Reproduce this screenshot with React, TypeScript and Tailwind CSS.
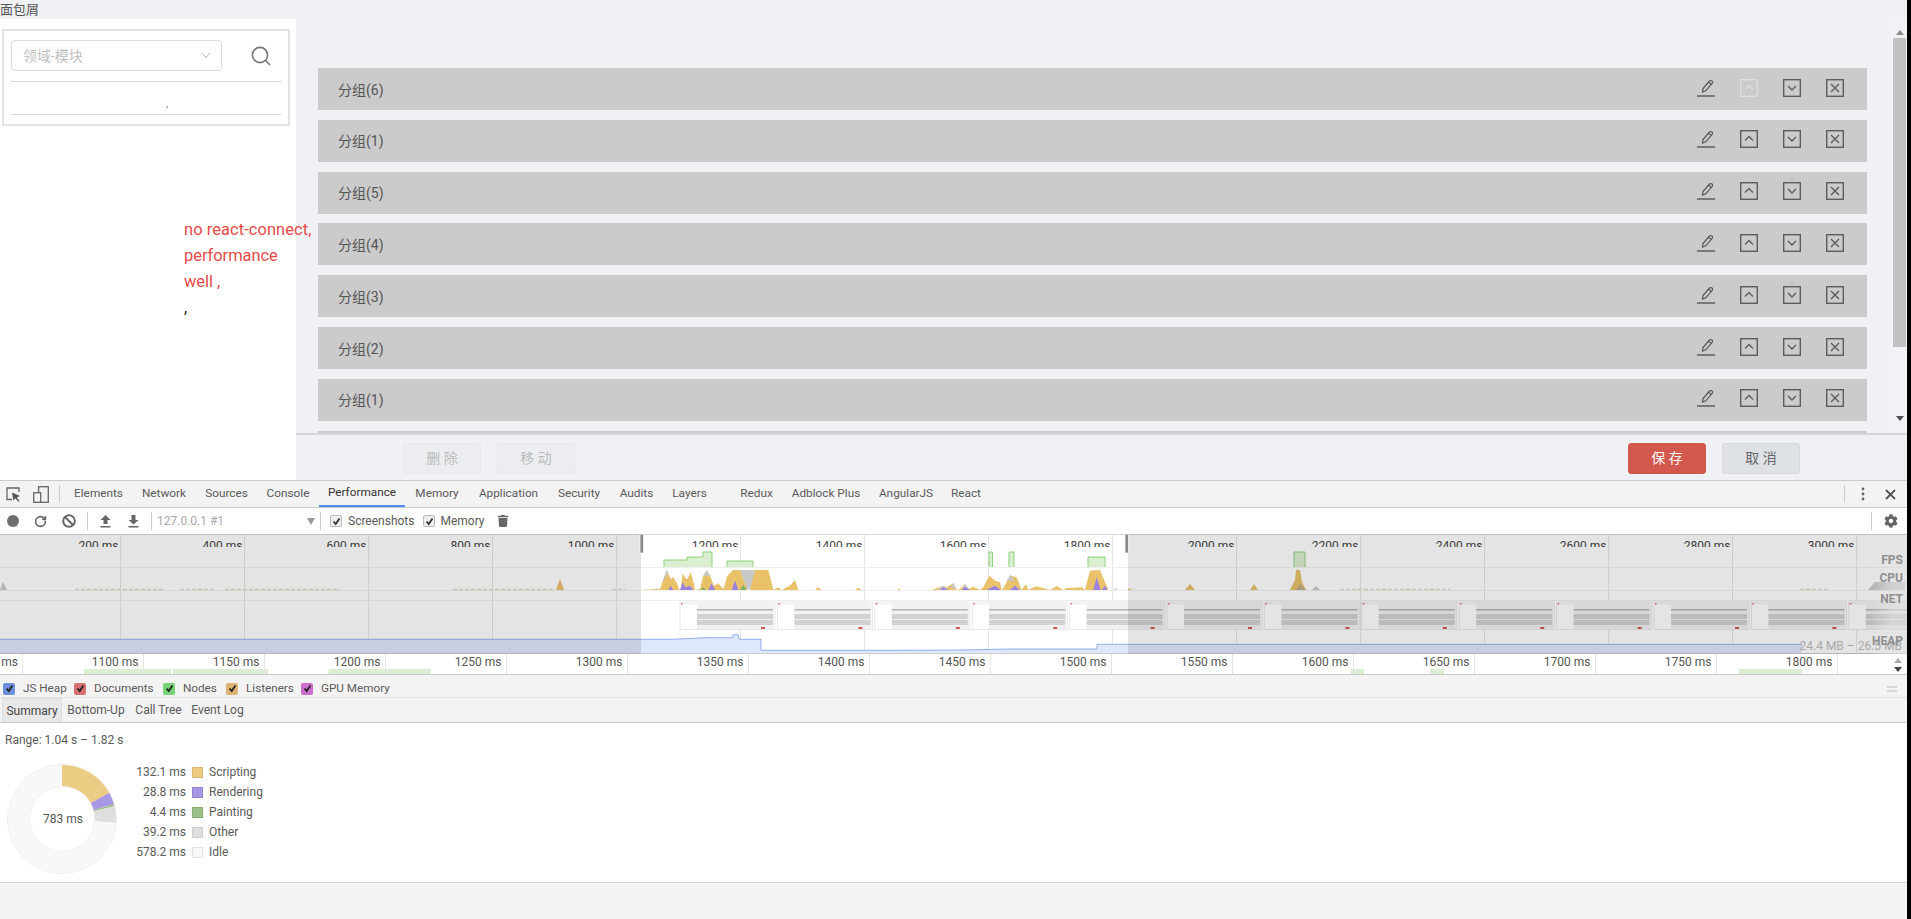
import React from 'react';
import { RotateCw } from 'lucide-react';
import { FaCog, FaTrash } from 'react-icons/fa';

const groups = ['分组(6)', '分组(1)', '分组(5)', '分组(4)', '分组(3)', '分组(2)', '分组(1)', '分组(0)'];

const tabs = [
  { name: 'Elements', cls: 'w-[67px]' },
  { name: 'Network', cls: 'w-[64px]' },
  { name: 'Sources', cls: 'w-[61px]' },
  { name: 'Console', cls: 'w-[62px]' },
  { name: 'Performance', cls: 'w-[86px]' },
  { name: 'Memory', cls: 'w-[64px]' },
  { name: 'Application', cls: 'w-[79px]' },
  { name: 'Security', cls: 'w-[62px]' },
  { name: 'Audits', cls: 'w-[53px]' },
  { name: 'Layers', cls: 'w-[53px] mr-[15px]' },
  { name: 'Redux', cls: 'w-[51px]' },
  { name: 'Adblock Plus', cls: 'w-[88px]' },
  { name: 'AngularJS', cls: 'w-[72px]' },
  { name: 'React', cls: 'w-[48px]' },
];

const counters = [
  { name: 'JS Heap', swatch: 'bg-[#6c8fdb]', width: 'w-[71px]' },
  { name: 'Documents', swatch: 'bg-[#d66f6f]', width: 'w-[89px]' },
  { name: 'Nodes', swatch: 'bg-[#78d278]', width: 'w-[63px]' },
  { name: 'Listeners', swatch: 'bg-[#dfb373]', width: 'w-[75px]' },
  { name: 'GPU Memory', swatch: 'bg-[#cc6ccc]', width: 'w-[100px]' },
];

const summary = [
  { value: 132.1, label: 'Scripting', color: '#eccb83', cls: 'bg-[#eccb83] border-[#d9b76c]' },
  { value: 28.8, label: 'Rendering', color: '#a897e3', cls: 'bg-[#a897e3] border-[#9583d3]' },
  { value: 4.4, label: 'Painting', color: '#9bc089', cls: 'bg-[#9bc089] border-[#86ad73]' },
  { value: 39.2, label: 'Other', color: '#dedede', cls: 'bg-[#dedede] border-[#cfcfcf]' },
  { value: 578.2, label: 'Idle', color: '#f8f8f8', cls: 'bg-[#f8f8f8] border-[#e2e2e2]' },
];

const gridX = Array.from({ length: 15 }, (_, i) => 120.5 + i * 124);
const rulerX = Array.from({ length: 15 }, (_, i) => 143.5 + i * 121);

const PencilIcon = () => (
  <svg width="18" height="18" viewBox="0 0 18 18" fill="none" stroke="#555" strokeWidth="1.2">
    <path d="M5.5 13 L6 9.5 L12.5 2 Q13.5 1 15 2 Q16.2 3.2 15.2 4.4 L8.7 11.8 Z" />
    <path d="M11.6 3.2 L14.2 5.4" />
    <path d="M0 17 H18" strokeWidth="1.4" />
  </svg>
);

const BoxIcon = ({ d, faded }: { d: string; faded?: boolean }) => (
  <svg width="18" height="18" viewBox="0 0 18 18" fill="none" stroke={faded ? '#dedede' : '#5c5c5c'} strokeWidth="1.4">
    <rect x="0.7" y="0.7" width="16.6" height="16.6" />
    <path d={d} />
  </svg>
);

const GroupRow = ({ name, first }: { name: string; first: boolean }) => (
  <div className="flex h-[42px] shrink-0 items-center justify-between bg-[#cbcbcb] pl-[20px] pr-[23px] text-[14px] text-[#555]">
    <span className="pt-[2px]">{name}</span>
    <div className="mb-[3px] flex items-center gap-[25px]">
      <PencilIcon />
      <BoxIcon d="M5 10.5 L9 6.5 L13 10.5" faded={first} />
      <BoxIcon d="M5 7 L9 11 L13 7" />
      <BoxIcon d="M5 5 L13 13 M13 5 L5 13" />
    </div>
  </div>
);

const LeftPanel = () => (
  <div className="relative z-10 w-[296px] shrink-0 bg-white pl-[2px] pt-[10px]">
    <div className="h-[97px] w-[288px] border-2 border-[#e2e2e2] px-[7px] pt-[9px]">
      <div className="flex items-center">
        <div className="flex h-[31px] w-[211px] items-center justify-between rounded-[4px] border border-[#dcdcdc] pl-[11px] pr-[10px] text-[14px] text-[#c0c0c0]">
          <span className="pt-[1px]">领域-模块</span>
          <svg width="10" height="7" viewBox="0 0 10 7" fill="none" stroke="#c4c4c4" strokeWidth="1.1">
            <path d="M1 1 L5 5.5 L9 1" />
          </svg>
        </div>
        <svg className="ml-[29px]" width="20" height="20" viewBox="0 0 20 20" fill="none" stroke="#777" strokeWidth="1.6">
          <circle cx="9" cy="9" r="7.6" />
          <path d="M14.5 14.5 L19 19" />
        </svg>
      </div>
      <div className="mt-[10px] flex h-[34px] w-[270px] items-center justify-center border-y border-[#d5d5d5] pl-[42px] pt-[10px] text-[11px] leading-none text-[#888]">
        ,
      </div>
    </div>
    <div className="ml-[182px] mt-[91px] whitespace-nowrap text-[16.4px] leading-[26px] text-[#e64a4a]">
      <div className="tracking-[0.1px]">no react-connect,</div>
      <div>performance</div>
      <div>well ,</div>
      <div className="text-[#222]">,</div>
    </div>
  </div>
);

const FormButton = ({ text, cls }: { text: string; cls: string }) => (
  <button className={`h-[31px] w-[78px] rounded-[3px] border text-[14px] ${cls}`}>{text}</button>
);

const Scrollbar = () => (
  <div className="flex w-[17px] shrink-0 flex-col items-center bg-[#f1f2f6] pl-[2px]">
    <div className="mt-[11px] h-0 w-0 border-x-[4px] border-b-[5px] border-x-transparent border-b-[#8b8b8b]" />
    <div className="mt-[3px] h-[309px] w-[13px] bg-[#c1c1c1]" />
    <div className="mt-[69px] h-0 w-0 border-x-[4px] border-t-[5px] border-x-transparent border-t-[#505050]" />
  </div>
);

const Page = () => (
  <div className="flex h-[480px] shrink-0 flex-col bg-[#f0f1f5]">
    <div className="h-[19px] shrink-0 text-[13px] leading-[19px] text-[#555]">面包屑</div>
    <div className="flex min-h-0 flex-1">
      <LeftPanel />
      <div className="flex min-w-0 flex-1 flex-col">
        <div className="flex h-[414px] shrink-0 overflow-hidden">
          <div className="flex min-w-0 flex-1 flex-col gap-[9.83px] pl-[22px] pr-[23px] pt-[49px]">
            {groups.map((g, i) => (
              <GroupRow key={i} name={g} first={i === 0} />
            ))}
          </div>
          <Scrollbar />
        </div>
        <div className="flex flex-1 items-start justify-between border-t-2 border-[#d5d6d9] pl-[107px] pr-[107px] pt-[8px]">
          <div className="flex gap-[16px]">
            <FormButton text="删 除" cls="border-[#e6e8eb] bg-[#ebedf0] text-[#bcbcbc]" />
            <FormButton text="移 动" cls="border-[#e6e8eb] bg-[#ebedf0] text-[#bcbcbc]" />
          </div>
          <div className="flex gap-[16px]">
            <FormButton text="保 存" cls="border-[#d2574c] bg-[#d2574c] text-white" />
            <FormButton text="取 消" cls="border-[#d5d8dd] bg-[#dee1e6] text-[#666]" />
          </div>
        </div>
      </div>
    </div>
  </div>
);

const TabBar = () => (
  <div className="flex h-[28px] shrink-0 items-center border-y border-[#cbcbcb] bg-[#f3f3f3] text-[11.8px] text-[#5a5a5a]">
    <svg className="ml-[6px]" width="15" height="15" viewBox="0 0 15 15" fill="none" stroke="#666" strokeWidth="1.3">
      <path d="M6 12.5 H1 V1 H13 V5" />
      <path d="M6 5.5 L14 9 L10.8 10.4 L13.6 14 L12.2 14.8 L9.6 11.2 L7.4 13.5 Z" fill="#555" stroke="none" />
    </svg>
    <svg className="ml-[12px]" width="16" height="17" viewBox="0 0 16 17" fill="none" stroke="#666" strokeWidth="1.3">
      <rect x="5.6" y="0.7" width="9.7" height="15.6" />
      <rect x="0.7" y="6.7" width="7" height="9.6" fill="#f3f3f3" />
    </svg>
    <div className="ml-[10px] mr-[5px] h-[18px] w-px bg-[#ccc]" />
    <div className="flex h-full items-stretch">
      {tabs.map((t) => (
        <div
          key={t.name}
          className={`flex items-center justify-center ${t.cls} ${t.name === 'Performance' ? 'border-b-2 border-[#4d8ef0] text-[#333]' : ''}`}
        >
          {t.name}
        </div>
      ))}
    </div>
    <div className="ml-auto h-[18px] w-px bg-[#ccc]" />
    <svg className="ml-[16px]" width="4" height="14" viewBox="0 0 4 14" fill="#666">
      <circle cx="2" cy="2" r="1.4" />
      <circle cx="2" cy="7" r="1.4" />
      <circle cx="2" cy="12" r="1.4" />
    </svg>
    <svg className="ml-[20px] mr-[11px]" width="11" height="11" viewBox="0 0 11 11" stroke="#555" strokeWidth="1.8">
      <path d="M1 1 L10 10 M10 1 L1 10" />
    </svg>
  </div>
);

const CheckBox = () => (
  <span className="flex h-[12px] w-[12px] items-center justify-center rounded-[2px] border border-[#bbb] bg-[#eee]">
    <svg width="9" height="9" viewBox="0 0 9 9" fill="none" stroke="#333" strokeWidth="1.8">
      <path d="M1.5 4.5 L3.7 7 L7.5 1.5" />
    </svg>
  </span>
);

const ToolBar = () => (
  <div className="flex h-[26px] shrink-0 items-center bg-white text-[12px] text-[#5a5a5a]">
    <div className="ml-[7px] h-[12px] w-[12px] rounded-full bg-[#6e6e6e]" />
    <RotateCw className="ml-[15px] text-[#666]" size={13} strokeWidth={3} />
    <svg className="ml-[15px]" width="14" height="14" viewBox="0 0 14 14" fill="none" stroke="#666" strokeWidth="2">
      <circle cx="7" cy="7" r="5.8" />
      <path d="M3 3 L11 11" />
    </svg>
    <div className="ml-[11px] h-[18px] w-px bg-[#ccc]" />
    <svg className="ml-[12px]" width="11" height="13" viewBox="0 0 11 13" fill="#666">
      <path d="M5.5 0 L10.5 5 H7.5 V9 H3.5 V5 H0.5 Z M0.5 11 H10.5 V12.6 H0.5 Z" />
    </svg>
    <svg className="ml-[17px]" width="11" height="13" viewBox="0 0 11 13" fill="#666">
      <path d="M3.5 0 H7.5 V5 H10.5 L5.5 9.6 L0.5 5 H3.5 Z M0.5 11 H10.5 V12.6 H0.5 Z" />
    </svg>
    <div className="ml-[12px] h-[18px] w-px bg-[#ccc]" />
    <div className="ml-[5px] flex w-[160px] items-center justify-between text-[#aaa]">
      <span>127.0.0.1 #1</span>
      <span className="mr-[2px] h-0 w-0 border-x-[4px] border-t-[7px] border-x-transparent border-t-[#999]" />
    </div>
    <div className="ml-[3px] h-[18px] w-px bg-[#ccc]" />
    <div className="ml-[9px]"><CheckBox /></div>
    <span className="ml-[6px]">Screenshots</span>
    <div className="ml-[9px]"><CheckBox /></div>
    <span className="ml-[5px]">Memory</span>
    <FaTrash className="ml-[12px] text-[#666]" size={12} />
    <div className="ml-auto h-[18px] w-px bg-[#ccc]" />
    <FaCog className="ml-[12px] mr-[9px] text-[#666]" size={14} />
  </div>
);

const thumbX = Array.from({ length: 13 }, (_, i) => 680 + i * 97.4);

const Thumb = ({ x }: { x: number }) => (
  <g transform={`translate(${x} 602)`}>
    <rect x="0" y="0" width="95" height="27.5" fill="#fff" stroke="#e8e8e8" />
    <rect x="17" y="1" width="77" height="26" fill="#f1f1f3" />
    <rect x="1" y="0.5" width="93" height="2" fill="#f2f2f2" />
    <rect x="1" y="1" width="1.5" height="1.5" fill="#d66" />
    <rect x="17" y="7" width="76" height="1.5" fill="#b4b4b4" />
    <rect x="17" y="12" width="76" height="5" fill="#d2d2d2" />
    <rect x="17" y="18" width="76" height="5" fill="#d2d2d2" />
    <rect x="81" y="25" width="4" height="2" fill="#d2574c" />
  </g>
);

const Overview = () => (
  <svg className="block shrink-0" width="1907" height="120" viewBox="0 534 1907 120">
    <defs>
      <clipPath id="rulerClip">
        <rect x="0" y="534" width="1907" height="13" />
      </clipPath>
      <linearGradient id="fadeRight" x1="0" x2="1" y1="0" y2="0">
        <stop offset="0" stopColor="#e5e5e5" stopOpacity="0" />
        <stop offset="0.6" stopColor="#e5e5e5" stopOpacity="1" />
      </linearGradient>
    </defs>
    <rect x="0" y="534" width="1907" height="120" fill="#fff" />

    {gridX.map((x) => (
      <path key={x} d={`M${x} 534 V653`} stroke="#e6e6e6" />
    ))}
    {[567.5, 590.5, 600.5].map((y) => (
      <path key={y} d={`M0 ${y} H1907`} stroke="#efefef" />
    ))}

    <g clipPath="url(#rulerClip)" fontSize="12" fill="#444" textAnchor="end" fontFamily="Roboto, sans-serif">
      {gridX.map((x, i) => (
        <text key={x} x={x - 2} y="550">{`${(i + 1) * 200} ms`}</text>
      ))}
    </g>
    <path d="M0 534.5 H1907" stroke="#d8d8d8" />

    {/* FPS */}
    <g fill="#d9efd0" stroke="#8fd07c" strokeWidth="1">
      <path d="M664 567 V560 H687 V557 H703 V552 H712 V567" />
      <path d="M727 567 V561 H753 V567" />
      <path d="M989 567 V552 H992.5 V567" />
      <path d="M1009 567 V552 H1014 V567" />
      <path d="M1088 567 V557 H1105 V567" />
      <path d="M1294 567 V552 H1305 V567" />
    </g>

    {/* CPU, selection start */}
    <g transform="translate(640 534) scale(0.3333)">
      <path d="M300 108 L345 108 L335 166 L320 166 Z" fill="#c8c8c8" />
      <path
        fill="#e8c168"
        d="M0 168 L40 166 L60 165 L65 150 L80 108 L92 135 L100 130 L112 150 L118 168 L122 165 L128 118 L138 135 L142 135 L152 115 L162 150 L165 168 L180 165 L190 125 L200 110 L212 130 L222 155 L235 148 L245 160 L250 165 L262 125 L280 108 L300 108 L322 168 L330 168 L345 108 L385 108 L400 168 L415 160 L425 168 L440 160 L450 155 L465 138 L475 168 L525 168 L535 160 L545 168 L645 168 L655 162 L665 168 L770 168 L780 163 L780 168 Z"
      />
      <path d="M65 150 L80 108 L92 125 L85 115 Z M190 125 L200 108 L212 125 Z M45 166 L50 162 L55 166 Z" fill="#c8c8c8" />
      <path fill="#9b82e0" d="M85 168 L92 155 L100 168 Z M120 168 L128 145 L136 160 L142 158 L150 155 L160 168 Z M205 168 L215 148 L225 168 Z M275 168 L285 140 L295 168 Z" />
      <path fill="#7fb069" d="M182 168 L190 160 L198 168 Z M300 168 L310 152 L320 168 Z" />
    </g>
    {/* CPU, selection end */}
    <g transform="translate(900 534) scale(0.3333)">
      <path
        fill="#e8c168"
        d="M0 168 L95 168 L130 155 L140 160 L160 148 L170 168 L180 165 L195 150 L205 165 L220 158 L240 168 L250 160 L268 125 L285 140 L300 145 L305 168 L312 160 L330 124 L350 130 L365 168 L378 150 L385 168 L395 162 L410 157 L450 168 L470 156 L490 168 L500 162 L545 160 L555 168 L570 110 L600 108 L625 168 L680 168 L690 163 L695 168 Z"
      />
      <path fill="#c8c8c8" d="M110 166 L130 155 L145 166 Z M150 160 L160 148 L170 166 Z M188 160 L195 150 L205 165 Z M320 140 L330 124 L345 140 Z M640 168 L647 163 L654 168 Z" />
      <path fill="#9b82e0" d="M120 168 L130 160 L145 168 Z M185 168 L195 158 L210 168 Z M260 168 L285 155 L302 168 Z M330 168 L345 155 L360 168 Z M580 168 L590 130 L602 168 Z M605 168 L615 155 L622 168 Z" />
    </g>
    {/* CPU, outside the selection */}
    <path d="M0 590 L3 582 L7 590 Z" fill="#c8c8c8" />
    <path d="M75 589.5 H165 M180 589.5 H215 M225 589.5 H340 M453 589.5 H555 M612 589.5 H625" stroke="#e5dcc6" strokeWidth="1.5" strokeDasharray="4 2" />
    <path d="M556 590 L560 579 L564 590 Z" fill="#e8c168" />
    <path d="M1185 590 L1190 584 L1195 590 Z M1250 590 L1254 584 L1258 590 Z" fill="#e8c168" />
    <path d="M1290 590 L1295 580 L1296 570 L1300 570 L1302 582 L1306 590 Z" fill="#e8c168" />
    <path d="M1296 590 L1300 584 L1306 590 Z M1312 590 L1316 586 L1320 590 Z M1868 590 L1875 582 L1905 582 V590 Z" fill="#9b9b9b" opacity="0.55" />
    <path d="M1340 589.5 H1450 M1800 589.5 H1830" stroke="#e5dcc6" strokeWidth="1.5" strokeDasharray="4 2" />

    {thumbX.map((x) => (
      <Thumb key={x} x={x} />
    ))}

    {/* Heap */}
    <path
      d="M0 639.3 H672 L707 637.7 H733 V634.7 H738 L739 639.3 H761 V650.3 H900 L963 650 L1010 649 H1097 V644.3 H1802 V653 H0 Z"
      fill="#dfe7fa"
    />
    <path
      d="M0 639.3 H672 L707 637.7 H733 V634.7 H738 L739 639.3 H761 V650.3 H900 L963 650 L1010 649 H1097 V644.3 H1802"
      fill="none"
      stroke="#8fb0ec"
    />
    <path d="M0 653.5 H1907" stroke="#ccc" />

    {/* Dim everything outside the selected range */}
    <rect x="0" y="534" width="641" height="120" fill="#000" opacity="0.105" />
    <rect x="1128" y="534" width="779" height="120" fill="#000" opacity="0.105" />
    <rect x="640" y="534" width="3.5" height="19" fill="#8a8a8a" stroke="#fff" strokeWidth="0.7" />
    <rect x="1125" y="534" width="3.5" height="19" fill="#8a8a8a" stroke="#fff" strokeWidth="0.7" />

    <rect x="1870" y="567" width="37" height="87" fill="url(#fadeRight)" opacity="0.6" />
    <g fontSize="12" fontFamily="Roboto, sans-serif" textAnchor="end">
      <text x="1902" y="650" fill="#a8a8a8">24.4 MB – 26.5 MB</text>
      <g fill="#8f8f8f" fontWeight="700">
        <text x="1903" y="563.5">FPS</text>
        <text x="1903" y="581.5">CPU</text>
        <text x="1903" y="602.5">NET</text>
        <text x="1903" y="644.5">HEAP</text>
      </g>
    </g>
  </svg>
);

const TimeRuler = () => (
  <svg className="block shrink-0" width="1907" height="21" viewBox="0 654 1907 21">
    <rect x="0" y="654" width="1907" height="21" fill="#fff" />
    <g fill="#dcefd4">
      <rect x="84" y="669" width="87" height="5" />
      <rect x="173" y="669" width="95" height="5" />
      <rect x="328.5" y="669" width="102.5" height="5" />
      <rect x="1351" y="669" width="13" height="5" />
      <rect x="1430" y="669" width="14" height="5" />
      <rect x="1739" y="669" width="63" height="5" />
    </g>
    <path d="M22.5 654 V674" stroke="#e6e6e6" />
    {rulerX.map((x) => (
      <path key={x} d={`M${x} 654 V674`} stroke="#e6e6e6" />
    ))}
    <g fontSize="12" fill="#555" textAnchor="end" fontFamily="Roboto, sans-serif">
      <text x="18" y="666">0 ms</text>
      {rulerX.map((x, i) => (
        <text key={x} x={x - 5} y="666">{`${1100 + i * 50} ms`}</text>
      ))}
    </g>
    <path d="M1898 658 L1902 663 H1894 Z" fill="#aaa" />
    <path d="M1894 667 H1902 L1898 672 Z" fill="#444" />
    <path d="M0 674.5 H1907" stroke="#c8c8c8" />
  </svg>
);

const CounterRow = () => (
  <div className="flex h-[23px] shrink-0 items-center border-b border-[#e2e2e2] bg-[#f3f3f3] pl-[3px] pt-[5px] text-[11.7px] text-[#5a5a5a]">
    {counters.map((c) => (
      <div key={c.name} className={`flex items-center gap-[8px] ${c.width}`}>
        <span className={`flex h-[12px] w-[12px] items-center justify-center rounded-[2px] ${c.swatch}`}>
          <svg width="9" height="9" viewBox="0 0 9 9" fill="none" stroke="#222" strokeWidth="1.8">
            <path d="M1.5 4.5 L3.7 7 L7.5 1.5" />
          </svg>
        </span>
        <span>{c.name}</span>
      </div>
    ))}
    <svg className="ml-auto mr-[10px]" width="10" height="6" viewBox="0 0 10 6" stroke="#bbb">
      <path d="M0 1 H10 M0 5 H10" />
    </svg>
  </div>
);

const SubTabs = () => (
  <div className="flex h-[25px] shrink-0 items-stretch border-b border-[#ccc] bg-[#f3f3f3] pl-[2px] text-[12px] text-[#5a5a5a]">
    <div className="flex w-[60px] items-center justify-center border-x border-t border-[#ddd] bg-[#e8e8e8] text-[#444]">Summary</div>
    <div className="flex w-[68px] items-center justify-center">Bottom-Up</div>
    <div className="flex w-[57px] items-center justify-center">Call Tree</div>
    <div className="flex w-[61px] items-center justify-center">Event Log</div>
  </div>
);

const Donut = () => {
  const total = summary.reduce((s, x) => s + x.value, 0);
  const r = 43.5;
  const c = 2 * Math.PI * r;
  let offset = 0;
  return (
    <svg width="110" height="110" viewBox="0 0 110 110">
      <circle cx="55" cy="55" r="54.5" fill="none" stroke="#eee" />
      <circle cx="55" cy="55" r="32.5" fill="none" stroke="#f0f0f0" />
      {summary.map((s) => {
        const len = (s.value / total) * c;
        const el = (
          <circle
            key={s.label}
            cx="55"
            cy="55"
            r={r}
            fill="none"
            stroke={s.color}
            strokeWidth="21"
            strokeDasharray={`${len} ${c - len}`}
            strokeDashoffset={-offset}
            transform="rotate(-90 55 55)"
          />
        );
        offset += len;
        return el;
      })}
      <text x="56" y="59" textAnchor="middle" fontSize="12" fill="#555" fontFamily="Roboto, sans-serif">
        783 ms
      </text>
    </svg>
  );
};

const SummaryPane = () => (
  <div className="h-[160px] shrink-0 border-b border-[#d5d5d5] bg-white pl-[5px] pt-[9px] text-[12px] text-[#5a5a5a]">
    <div className="h-[16px] leading-[16px]">Range: 1.04 s – 1.82 s</div>
    <div className="mt-[16px] flex pl-[2px]">
      <Donut />
      <div className="ml-[12px] mt-[-2px]">
        {summary.map((s) => (
          <div key={s.label} className="flex h-[20px] items-center">
            <span className="w-[57px] text-right">{s.value} ms</span>
            <span className={`ml-[6px] h-[11px] w-[11px] border ${s.cls}`} />
            <span className="ml-[6px]">{s.label}</span>
          </div>
        ))}
      </div>
    </div>
  </div>
);

const DevTools = () => (
  <div className="flex flex-1 flex-col bg-[#f3f3f3]">
    <TabBar />
    <ToolBar />
    <Overview />
    <TimeRuler />
    <CounterRow />
    <SubTabs />
    <SummaryPane />
  </div>
);

export default function App() {
  return (
    <div className="flex h-[919px] w-full overflow-hidden bg-black font-['Roboto','Noto_Sans_CJK_SC',sans-serif]">
      <div className="flex w-[1907px] shrink-0 flex-col">
        <Page />
        <DevTools />
      </div>
    </div>
  );
}
